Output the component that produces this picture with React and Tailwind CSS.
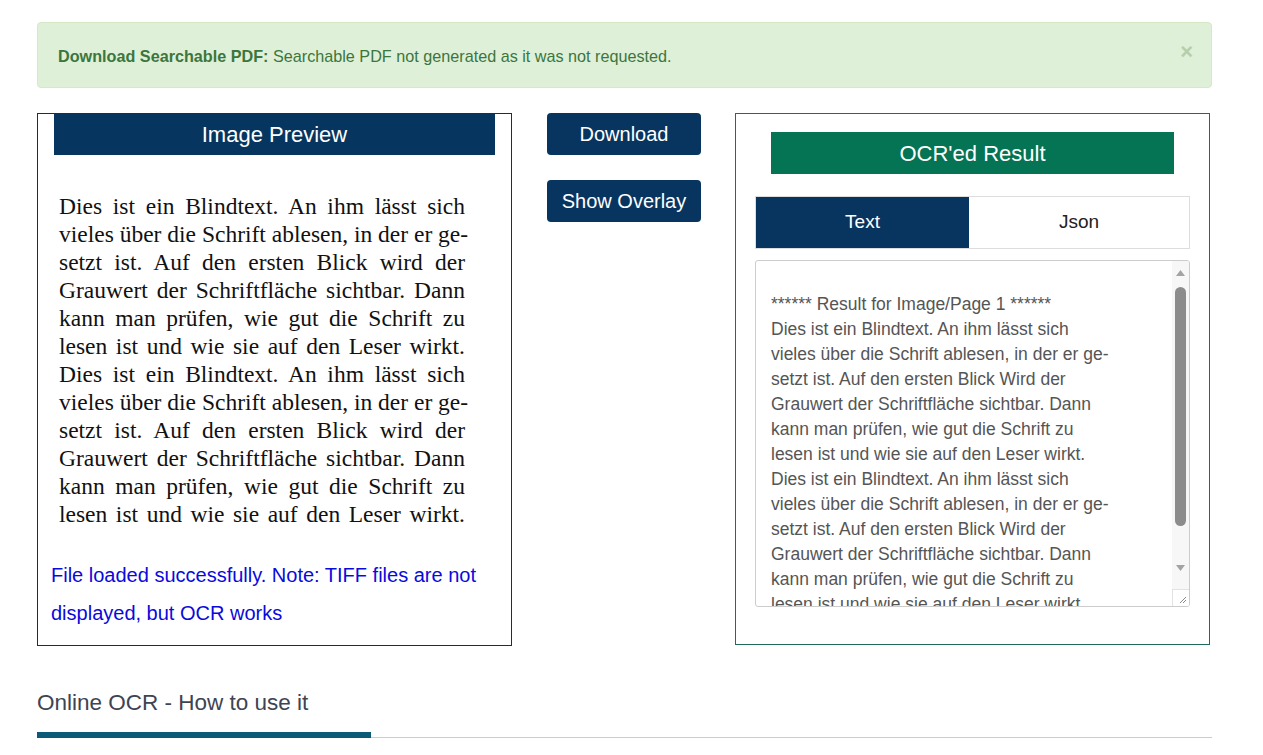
export default function App() {
  const serif = [
    "Dies ist ein Blindtext. An ihm lässt sich",
    "vieles über die Schrift ablesen, in der er ge-",
    "setzt ist. Auf den ersten Blick wird der",
    "Grauwert der Schriftfläche sichtbar. Dann",
    "kann man prüfen, wie gut die Schrift zu",
    "lesen ist und wie sie auf den Leser wirkt.",
    "Dies ist ein Blindtext. An ihm lässt sich",
    "vieles über die Schrift ablesen, in der er ge-",
    "setzt ist. Auf den ersten Blick wird der",
    "Grauwert der Schriftfläche sichtbar. Dann",
    "kann man prüfen, wie gut die Schrift zu",
    "lesen ist und wie sie auf den Leser wirkt.",
  ];
  const ocr = [
    "",
    "****** Result for Image/Page 1 ******",
    "Dies ist ein Blindtext. An ihm lässt sich",
    "vieles über die Schrift ablesen, in der er ge-",
    "setzt ist. Auf den ersten Blick Wird der",
    "Grauwert der Schriftfläche sichtbar. Dann",
    "kann man prüfen, wie gut die Schrift zu",
    "lesen ist und wie sie auf den Leser wirkt.",
    "Dies ist ein Blindtext. An ihm lässt sich",
    "vieles über die Schrift ablesen, in der er ge-",
    "setzt ist. Auf den ersten Blick Wird der",
    "Grauwert der Schriftfläche sichtbar. Dann",
    "kann man prüfen, wie gut die Schrift zu",
    "lesen ist und wie sie auf den Leser wirkt.",
  ];
  return (
    <div className="bg-white min-h-[755px] w-[1263px] font-['Liberation_Sans',Arial,sans-serif]">
      <div className="ml-[37px] w-[1175px] pt-[22px]">
        {/* alert */}
        <div className="h-[66px] rounded border border-[#d6e9c6] bg-[#dff0d8] flex items-center justify-between pl-[20px] pr-[18px] text-[#3c763d]">
          <p className="text-[16.2px] leading-none mt-[2px]">
            <b>Download Searchable PDF:</b> Searchable PDF not generated as it was not requested.
          </p>
          <span className="text-[22px] font-bold text-[#b3cfad] leading-none -mt-[7px]">×</span>
        </div>

        <div className="flex items-start mt-[25px]">
          {/* left panel */}
          <div className="w-[475px] h-[533px] border border-[#0b3352]">
            <div className="mx-[16px] h-[41px] bg-[#06355f] flex items-center justify-center text-white text-[22px]">
              Image Preview
            </div>
            <div className="pl-[21px] pt-[37px] font-['Liberation_Serif','Times_New_Roman',serif] text-[23.5px] leading-[28px] text-[#111]">
              {serif.map((l, i) => (
                <div key={i} className="whitespace-nowrap w-[406px] text-justify [text-align-last:justify]">{l}</div>
              ))}
            </div>
            <div className="pl-[13px] pt-[28px] text-[20px] leading-[38px] text-[#0a0adc]">
              File loaded successfully. Note: TIFF files are not
              <br />
              displayed, but OCR works
            </div>
          </div>

          {/* middle */}
          <div className="ml-[35px] w-[154px] flex flex-col gap-[25px]">
            <button className="h-[42px] rounded-[4px] bg-[#07355f] text-white text-[20px]">Download</button>
            <button className="h-[42px] rounded-[4px] bg-[#07355f] text-white text-[20px]">Show Overlay</button>
          </div>

          {/* right panel */}
          <div className="ml-[34px] w-[475px] h-[532px] border border-[#1f6b5e] px-[19px] pt-[18px]">
            <div className="mx-[16px] h-[42px] bg-[#047454] flex items-center justify-center text-white text-[22px]">
              OCR'ed Result
            </div>
            <div className="mt-[22px] flex h-[53px] border border-[#dddddd]">
              <div className="w-[213px] bg-[#07355f] text-white text-[19px] flex items-center justify-center">Text</div>
              <div className="flex-1 bg-white text-[#222] text-[19px] flex items-center justify-center">Json</div>
            </div>
            <div className="relative mt-[11px] h-[347px] border border-[#cccccc] rounded-[3px] overflow-hidden">
              <div className="pl-[15px] pt-[6px] text-[17.5px] leading-[25px] text-[#555]">
                {ocr.map((l, i) => (
                  <div key={i} className="whitespace-nowrap h-[25px]">{l}</div>
                ))}
              </div>
              {/* scrollbar */}
              <div className="absolute right-0 top-0 bottom-0 w-[17px] bg-[#f7f7f7]">
                <div className="flex justify-center pt-[9px]">
                  <svg width="9" height="6" viewBox="0 0 9 6"><path d="M0 6 L4.5 0 L9 6 Z" fill="#a3a3a3" /></svg>
                </div>
                <div className="mx-auto mt-[11px] w-[11px] h-[239px] rounded-full bg-[#8c8c8c]"></div>
                <div className="flex justify-center mt-[39px]">
                  <svg width="9" height="6" viewBox="0 0 9 6"><path d="M0 0 L9 0 L4.5 6 Z" fill="#a3a3a3" /></svg>
                </div>
              </div>
              <div className="absolute right-0 bottom-0 w-[17px] h-[17px] bg-white border-t border-l border-[#e2e2e2]">
                <svg width="17" height="17" viewBox="0 0 17 17">
                  <path d="M13 7 L7 13 M13 10 L10 13" stroke="#8a8a8a" strokeWidth="1" />
                </svg>
              </div>
            </div>
          </div>
        </div>

        {/* how to */}
        <div className="mt-[44px] text-[22.5px] text-[#3e4452] leading-[26px]">Online OCR - How to use it</div>
        <div className="mt-[16px] relative h-[6px]">
          <div className="absolute left-0 bottom-0 w-full h-[1px] bg-[#cccccc]"></div>
          <div className="absolute left-0 top-0 w-[334px] h-[6px] bg-[#0b5a78]"></div>
        </div>
      </div>
    </div>
  );
}
